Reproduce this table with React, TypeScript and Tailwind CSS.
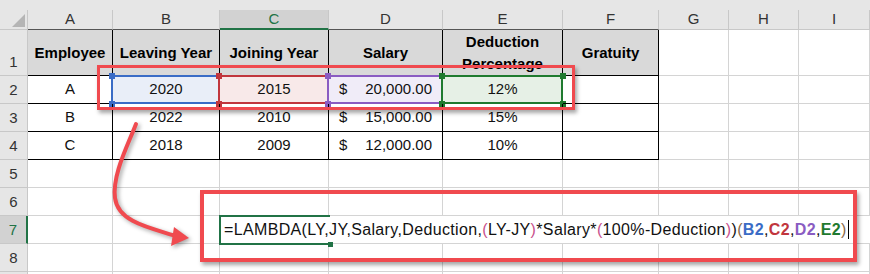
import React from "react";

const F = { fontFamily: '"Liberation Sans", Arial, sans-serif' };

function Sel({ border, fill }: { border: string; fill: string }) {
  return (
    <>
      <div className={`absolute inset-0 ${fill}`} />
      <div className={`absolute left-[-2px] top-[-1px] right-[-1px] bottom-[-1px] border-2 ${border}`} />
    </>
  );
}

export default function App() {
  const rh =
    "flex items-end justify-center pb-[4px] leading-[18px] bg-[#e6e6e6] border-r border-b border-[#c8c8c8] text-[15px] text-[#333]";
  const ch =
    "flex items-center justify-center bg-[#e6e6e6] border-r border-b border-[#c8c8c8] text-[15px] text-[#333]";
  const chT =
    "flex items-center justify-center bg-[#e6e6e6] border-r border-b border-r-[#c8c8c8] border-b-[#555] text-[15px] text-[#333]";
  const th =
    "flex items-center justify-center text-center bg-[#d9d9d9] border-r border-b border-black font-bold text-[15px] text-black leading-[22px]";
  const td =
    "relative flex items-center justify-center border-r border-b border-black text-[15px] text-[#111]";
  const tdD =
    "relative flex items-center justify-between px-[10px] border-r border-b border-black text-[15px] text-[#111]";
  const g = "border-r border-b border-[#d4d4d4] bg-white";

  return (
    <div className="relative w-[870px] h-[274px] overflow-hidden bg-white" style={F}>
      <div className="grid grid-cols-[28px_85px_107px_109px_114px_120px_96px_70px_70px_71px] grid-rows-[10px_20px_46px_28px_28px_28px_28px_28px_28px_28px_28px]">
        <div className="col-span-10 bg-[#e6e6e6]" />
        {/* column headers */}
        <div className="relative bg-[#e6e6e6] border-r border-b border-[#c8c8c8]">
          <svg className="absolute left-[12px] top-[4px]" width="14" height="14" viewBox="0 0 14 14">
            <polygon points="13,0 13,13 0,13" fill="#b5b5b5" />
          </svg>
        </div>
        <div className={chT}>A</div>
        <div className={chT}>B</div>
        <div className="flex items-center justify-center bg-[#d2d2d2] border-r border-r-[#c8c8c8] border-b-2 border-b-[#217346] text-[15px] text-[#217346]">
          C
        </div>
        <div className={chT}>D</div>
        <div className={chT}>E</div>
        <div className={chT}>F</div>
        <div className={ch}>G</div>
        <div className={ch}>H</div>
        <div className={ch}>I</div>

        {/* row 1 */}
        <div className={rh}>1</div>
        <div className={th}>Employee</div>
        <div className={th}>Leaving Year</div>
        <div className={th}>Joining Year</div>
        <div className={th}>Salary</div>
        <div className={th}>
          Deduction
          <br />
          Percentage
        </div>
        <div className={th}>Gratuity</div>
        <div className={g} />
        <div className={g} />
        <div className={g} />

        {/* row 2 */}
        <div className={rh}>2</div>
        <div className={td}>A</div>
        <div className={td}>
          <Sel border="border-[#3a6cc6]" fill="bg-[#e9eef8]" />
          <span className="relative">2020</span>
          <div className="absolute left-[-4px] top-[-3px] w-[6px] h-[6px] bg-[#3a6cc6]" />
          <div className="absolute left-[-4px] bottom-[-4px] w-[6px] h-[6px] bg-[#3a6cc6]" />
        </div>
        <div className={td}>
          <Sel border="border-[#c1363d]" fill="bg-[#f8e9e9]" />
          <span className="relative">2015</span>
          <div className="absolute left-[-4px] top-[-3px] w-[6px] h-[6px] bg-[#c1363d]" />
          <div className="absolute left-[-4px] bottom-[-4px] w-[6px] h-[6px] bg-[#c1363d]" />
        </div>
        <div className={tdD}>
          <Sel border="border-[#8a5cc2]" fill="bg-[#f0ecf8]" />
          <span className="relative">$</span>
          <span className="relative">20,000.00</span>
          <div className="absolute left-[-4px] top-[-3px] w-[6px] h-[6px] bg-[#8a5cc2]" />
          <div className="absolute left-[-4px] bottom-[-4px] w-[6px] h-[6px] bg-[#8a5cc2]" />
        </div>
        <div className={td}>
          <Sel border="border-[#1f7a2f]" fill="bg-[#e6f0e6]" />
          <span className="relative">12%</span>
          <div className="absolute left-[-4px] top-[-3px] w-[6px] h-[6px] bg-[#1f7a2f]" />
          <div className="absolute left-[-4px] bottom-[-4px] w-[6px] h-[6px] bg-[#1f7a2f]" />
          <div className="absolute right-[-4px] top-[-3px] w-[6px] h-[6px] bg-[#1f7a2f]" />
          <div className="absolute right-[-4px] bottom-[-4px] w-[6px] h-[6px] bg-[#1f7a2f]" />
        </div>
        <div className={td} />
        <div className={g} />
        <div className={g} />
        <div className={g} />

        {/* row 3 */}
        <div className={rh}>3</div>
        <div className={td}>B</div>
        <div className={td}>2022</div>
        <div className={td}>2010</div>
        <div className={tdD}>
          <span>$</span>
          <span>15,000.00</span>
        </div>
        <div className={td}>15%</div>
        <div className={td} />
        <div className={g} />
        <div className={g} />
        <div className={g} />

        {/* row 4 */}
        <div className={rh}>4</div>
        <div className={td}>C</div>
        <div className={td}>2018</div>
        <div className={td}>2009</div>
        <div className={tdD}>
          <span>$</span>
          <span>12,000.00</span>
        </div>
        <div className={td}>10%</div>
        <div className={td} />
        <div className={g} />
        <div className={g} />
        <div className={g} />

        {/* row 5 */}
        <div className={rh}>5</div>
        <div className={g} />
        <div className={g} />
        <div className={g} />
        <div className={g} />
        <div className={g} />
        <div className={g} />
        <div className={g} />
        <div className={g} />
        <div className={g} />

        {/* row 6 */}
        <div className={rh}>6</div>
        <div className={g} />
        <div className={g} />
        <div className={g} />
        <div className={g} />
        <div className={g} />
        <div className={g} />
        <div className={g} />
        <div className={g} />
        <div className={g} />

        {/* row 7 */}
        <div className="flex items-end justify-center pb-[4px] leading-[18px] bg-[#d2d2d2] border-b border-[#c8c8c8] border-r-2 border-r-[#217346] text-[15px] text-[#217346]">
          7
        </div>
        <div className={g} />
        <div className={g} />
        <div className="col-span-7 relative bg-white border-b border-[#d4d4d4] flex items-center">
          <div className="absolute left-[-1px] top-[-1px] w-[111px] h-[30px] border-l-2 border-t-2 border-b-2 border-[#217346]" />
          <div className="absolute left-[108px] top-[26px] w-[5px] h-[5px] bg-[#217346]" />
          <div className="relative pl-[4px] whitespace-nowrap text-[16px] tracking-[0.35px] text-[#111] flex items-center">
            <span>=LAMBDA(LY,JY,Salary,Deduction,</span>
            <span className="text-[#c8508c]">(</span>
            <span>LY-JY</span>
            <span className="text-[#c8508c]">)</span>
            <span>*Salary*</span>
            <span className="text-[#c8508c]">(</span>
            <span>100%-Deduction</span>
            <span className="text-[#c8508c]">)</span>
            <span>)</span>
            <span className="text-[#8a6a4a]">(</span>
            <span className="font-bold text-[#3a6cc6]">B2</span>
            <span>,</span>
            <span className="font-bold text-[#c1363d]">C2</span>
            <span>,</span>
            <span className="font-bold text-[#8a5cc2]">D2</span>
            <span>,</span>
            <span className="font-bold text-[#1f7a2f]">E2</span>
            <span className="text-[#8a6a4a]">)</span>
            <span className="ml-[1px] inline-block w-[1px] h-[19px] bg-black" />
          </div>
        </div>

        {/* row 8 */}
        <div className={rh}>8</div>
        <div className={g} />
        <div className={g} />
        <div className={g} />
        <div className={g} />
        <div className={g} />
        <div className={g} />
        <div className={g} />
        <div className={g} />
        <div className={g} />

        {/* row 9 (mostly off-screen) */}
        <div className={rh} />
        <div className={g} />
        <div className={g} />
        <div className={g} />
        <div className={g} />
        <div className={g} />
        <div className={g} />
        <div className={g} />
        <div className={g} />
        <div className={g} />
      </div>

      {/* annotation boxes */}
      <div className="absolute left-[97px] top-[65px] w-[478px] h-[45px] border-[3px] border-[#f04a4f] shadow-[2px_3px_4px_rgba(0,0,0,0.35)]" />
      <div className="absolute left-[200px] top-[190px] w-[657px] h-[72px] border-[4px] border-[#f04a4f] shadow-[2px_3px_4px_rgba(0,0,0,0.35)]" />

      {/* arrow */}
      <svg
        className="absolute left-0 top-0 drop-shadow-[2px_2px_2px_rgba(0,0,0,0.35)]"
        width="870"
        height="274"
        viewBox="0 0 870 274"
      >
        <path
          d="M136 124 C128 145 112 175 115 198 C118 222 150 228 176 236"
          fill="none"
          stroke="#f04a4f"
          strokeWidth="4"
          strokeLinecap="round"
        />
        <polygon points="189,238 174,227 171,246" fill="#f04a4f" />
      </svg>
    </div>
  );
}
